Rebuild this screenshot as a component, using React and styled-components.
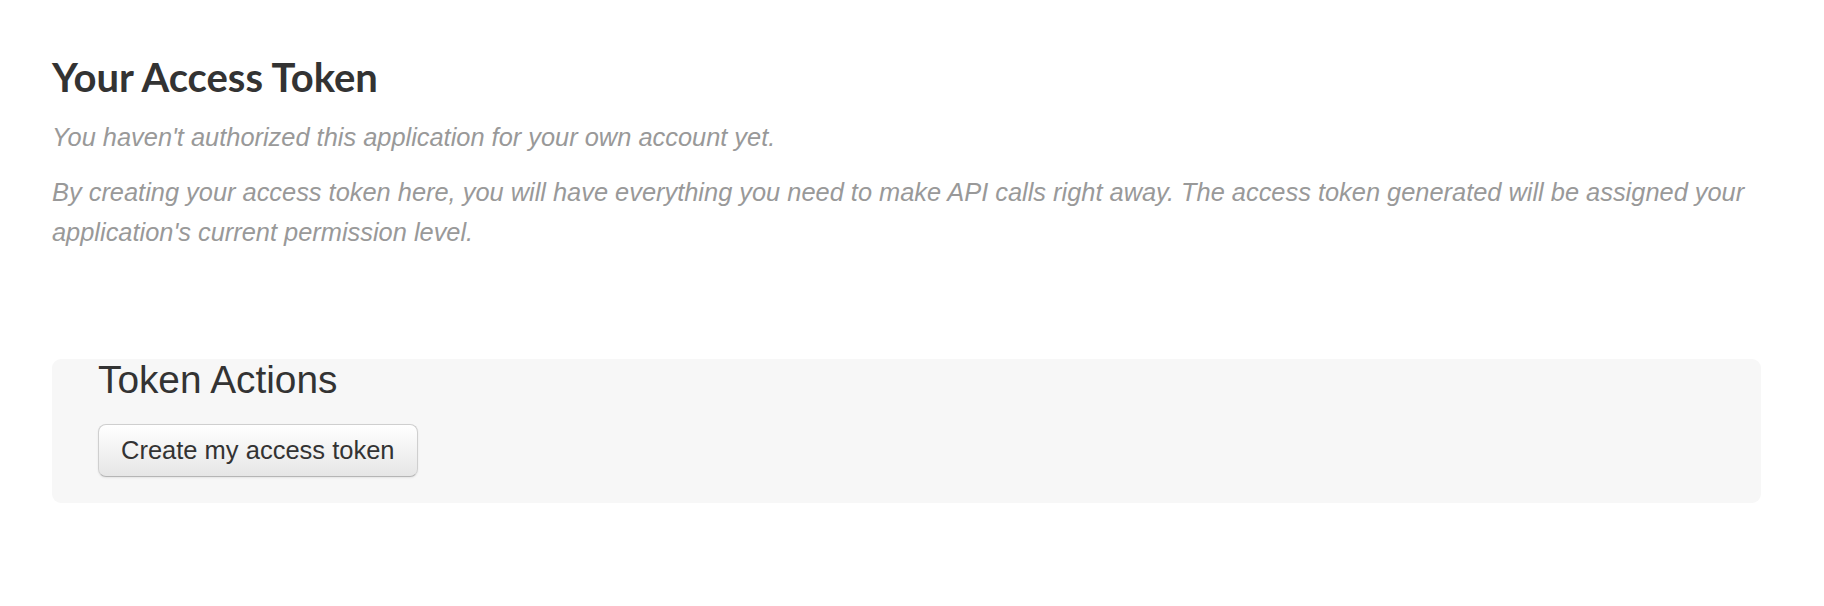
import React from "react";
import styled, { createGlobalStyle } from "styled-components";

const GlobalStyle = createGlobalStyle`
  html, body {
    margin: 0;
    padding: 0;
    background: #ffffff;
  }
  body {
    font-family: "Liberation Sans", Arial, sans-serif;
    color: #333333;
  }
`;

const Page = styled.div`
  padding: 53px 63px 0 52px;
`;

const Title = styled.h2`
  margin: 0;
  font-family: Lato, "Liberation Sans", sans-serif;
  font-weight: 700;
  font-size: 40px;
  line-height: 48px;
  color: #333333;
`;

const Lead = styled.p`
  margin: ${props => props.top || 0}px 0 0;
  font-style: italic;
  font-size: 25.4px;
  line-height: 40px;
  color: #999999;
`;

const ActionsPanel = styled.section`
  margin-top: 107px;
  padding: 0 46px 26px;
  background: #f7f7f7;
  border-radius: 9px;
`;

const PanelTitle = styled.h3`
  margin: 0;
  font-weight: 400;
  font-size: 38.8px;
  line-height: 42px;
  color: #333333;
`;

const ActionButton = styled.button`
  display: inline-block;
  margin-top: 23px;
  padding: 10px 22px 11px;
  font-family: "Liberation Sans", Arial, sans-serif;
  font-size: 25.5px;
  line-height: 30px;
  color: #333333;
  background: linear-gradient(#ffffff, #e6e6e6);
  border: 1px solid #cfcfcf;
  border-bottom-color: #b5b5b5;
  border-radius: 8px;
  box-shadow: inset 0 1px 0 rgba(255, 255, 255, 0.2), 0 1px 2px rgba(0, 0, 0, 0.08);
  cursor: pointer;
`;

export default function App() {
  return (
    <Page>
      <GlobalStyle />
      <Title>Your Access Token</Title>
      <Lead top={16}>You haven't authorized this application for your own account yet.</Lead>
      <Lead top={15}>
        By creating your access token here, you will have everything you need to make API calls right away. The access
        token generated will be assigned your application's current permission level.
      </Lead>
      <ActionsPanel>
        <PanelTitle>Token Actions</PanelTitle>
        <ActionButton type="button">Create my access token</ActionButton>
      </ActionsPanel>
    </Page>
  );
}
